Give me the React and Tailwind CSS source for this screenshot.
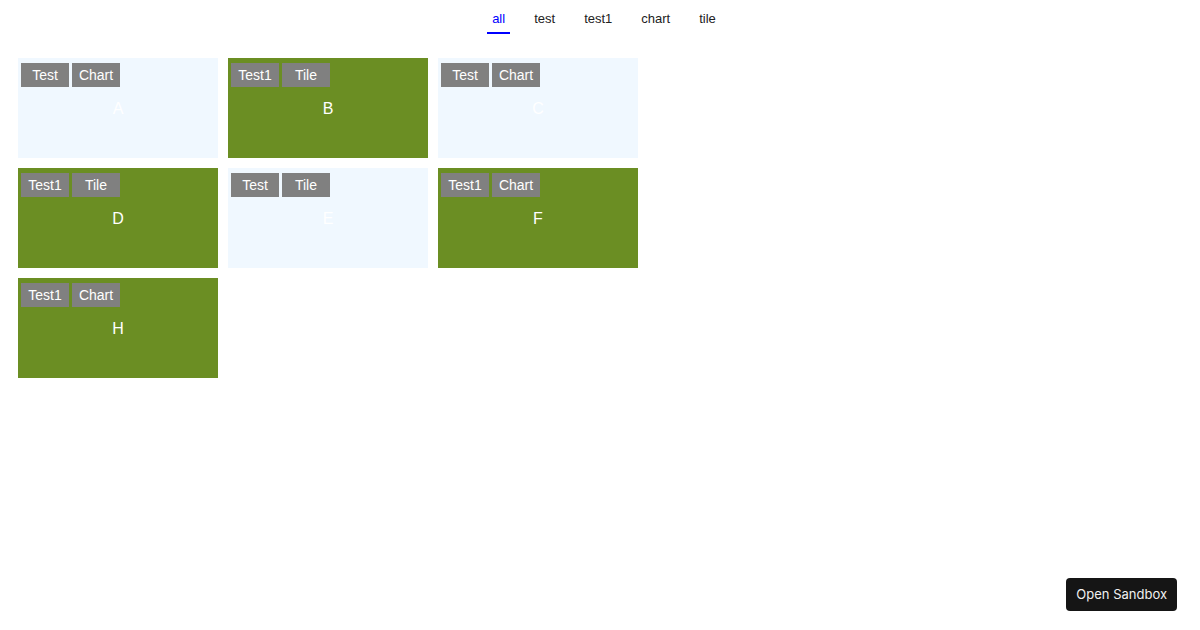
import React, { useState } from 'react';

const tabs = ['all', 'test', 'test1', 'chart', 'tile'];

const items = [
    { name: 'A', tags: ['Test', 'Chart'], green: false },
    { name: 'B', tags: ['Test1', 'Tile'], green: true },
    { name: 'C', tags: ['Test', 'Chart'], green: false },
    { name: 'D', tags: ['Test1', 'Tile'], green: true },
    { name: 'E', tags: ['Test', 'Tile'], green: false },
    { name: 'F', tags: ['Test1', 'Chart'], green: true },
    { name: 'H', tags: ['Test1', 'Chart'], green: true },
];

function Card({ item }) {
    return (
        <div className={`relative w-[200px] h-[100px] flex items-center justify-center pt-[2px] ${item.green ? 'bg-[#6b8e23]' : 'bg-[#f0f8ff]'}`}>
            <div className="absolute top-[5px] left-[3px] flex gap-[3px]">
                {item.tags.map((tag) => (
                    <span key={tag} className="w-[48px] h-[24px] flex items-center justify-center bg-[#808080] text-white text-[14px]">
                        {tag}
                    </span>
                ))}
            </div>
            <span className="text-white text-[16px]">{item.name}</span>
        </div>
    );
}

export default function App() {
    const [active, setActive] = useState('all');

    return (
        <div className="min-h-[630px] bg-white font-['Liberation_Sans',Arial,sans-serif]">
            <nav className="flex justify-center gap-[19px] pt-[10px] pl-[8px]">
                {tabs.map((tab) => (
                    <button
                        key={tab}
                        onClick={() => setActive(tab)}
                        className={`px-[5px] pb-[4px] text-[13px] leading-[18px] border-b-2 ${active === tab ? 'text-[#0000ff] border-[#0000ff]' : 'text-[#222] border-transparent'}`}
                    >
                        {tab}
                    </button>
                ))}
            </nav>
            <div className="grid grid-cols-[repeat(3,200px)] gap-[10px] pl-[18px] pt-[24px]">
                {items.map((item) => (
                    <Card key={item.name} item={item} />
                ))}
            </div>
            <button className="fixed right-[23px] bottom-[19px] h-[33px] px-[10px] rounded-[4px] bg-[#151515] text-[#f0f0f0] text-[13px] font-['Inter',sans-serif]">
                Open Sandbox
            </button>
        </div>
    );
}
